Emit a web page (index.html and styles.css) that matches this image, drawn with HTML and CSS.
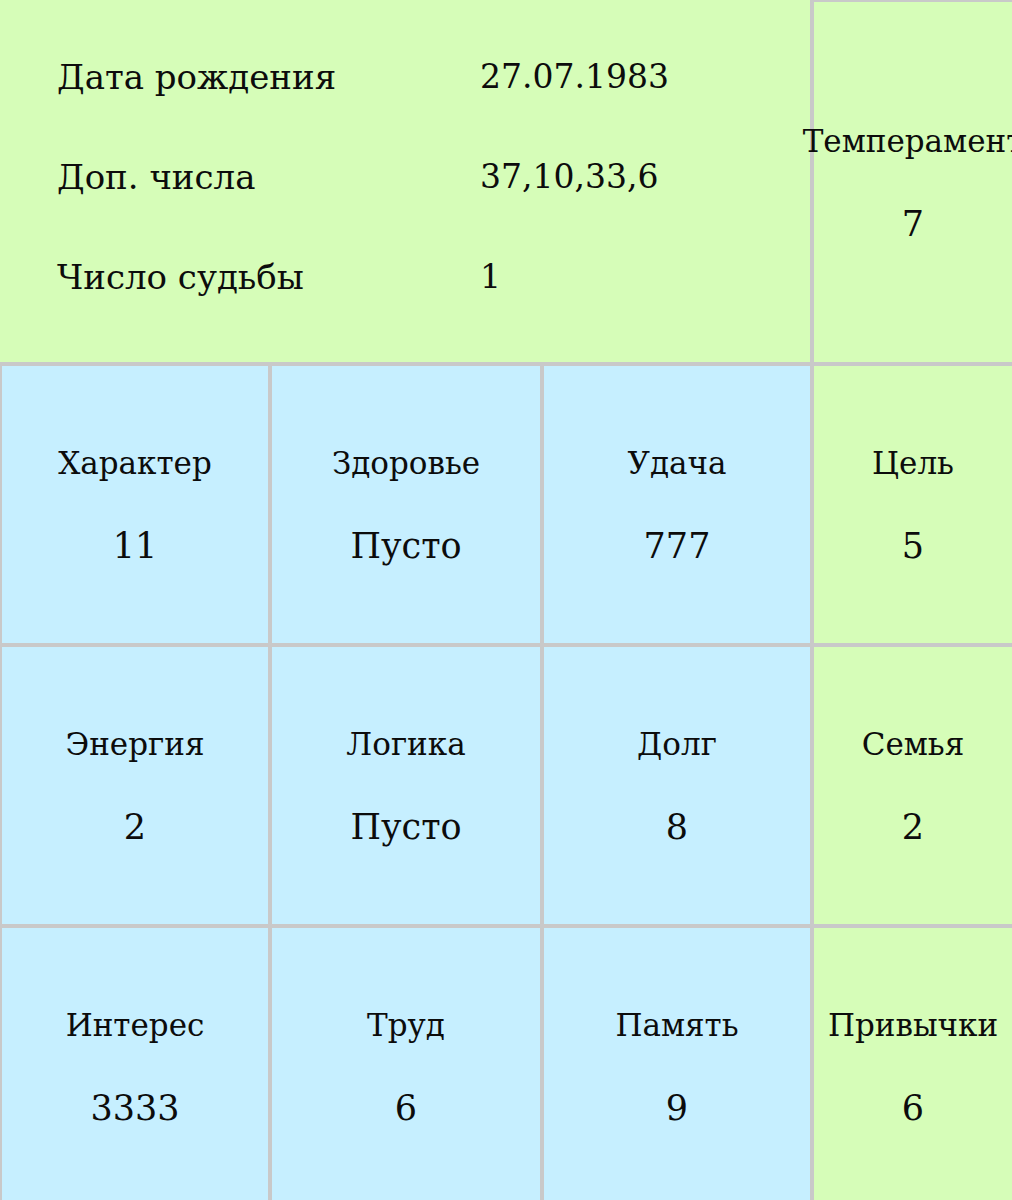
FILE: index.html
```html
<!DOCTYPE html>
<html lang="ru">
<head>
<meta charset="utf-8">
<title>Матрица</title>
<link rel="stylesheet" href="styles.css">
</head>
<body>
<div class="board">
  <div class="info">
    <div class="info-grid">
      <div class="info-label">Дата рождения</div><div class="info-value">27.07.1983</div>
      <div class="info-label">Доп. числа</div><div class="info-value">37,10,33,6</div>
      <div class="info-label">Число судьбы</div><div class="info-value">1</div>
    </div>
  </div>
  <div class="cell green temper"><div class="label">Темперамент</div><div class="value">7</div></div>

  <div class="cell blue"><div class="label">Характер</div><div class="value">11</div></div>
  <div class="cell blue"><div class="label">Здоровье</div><div class="value">Пусто</div></div>
  <div class="cell blue"><div class="label">Удача</div><div class="value">777</div></div>
  <div class="cell green"><div class="label">Цель</div><div class="value">5</div></div>

  <div class="cell blue"><div class="label">Энергия</div><div class="value">2</div></div>
  <div class="cell blue"><div class="label">Логика</div><div class="value">Пусто</div></div>
  <div class="cell blue"><div class="label">Долг</div><div class="value">8</div></div>
  <div class="cell green"><div class="label">Семья</div><div class="value">2</div></div>

  <div class="cell blue"><div class="label">Интерес</div><div class="value">3333</div></div>
  <div class="cell blue"><div class="label">Труд</div><div class="value">6</div></div>
  <div class="cell blue"><div class="label">Память</div><div class="value">9</div></div>
  <div class="cell green"><div class="label">Привычки</div><div class="value">6</div></div>
</div>
</body>
</html>
```

FILE: styles.css
```css
html, body {
  margin: 0;
  padding: 0;
  overflow: hidden;
  background: #ffffff;
}

body {
  font-family: "DejaVu Serif", "Liberation Serif", serif;
  color: #0c0c0c;
}

.board {
  display: grid;
  grid-template-columns: 266px 268px 266px 198px;
  grid-template-rows: 362px 277px 277px 277px;
  column-gap: 4px;
  row-gap: 4px;
  padding: 0 0 0 2px;
  background: #c9c9c9;
  width: 1010px;
}

.info {
  grid-column: 1 / 4;
  background: #d6fdb8;
  margin-left: -2px;
  padding: 27px 0 0 57px;
}

.info-grid {
  display: grid;
  grid-template-columns: 423px auto;
  grid-auto-rows: 100px;
  font-size: 34px;
  line-height: 100px;
}

.info-value {
  font-size: 33px;
}

.info-label,
.info-value {
  white-space: nowrap;
}

.cell {
  display: flex;
  flex-direction: column;
  align-items: center;
  justify-content: center;
  gap: 43px;
  white-space: nowrap;
}

.green {
  background: #d6fdb8;
}

.blue {
  background: #c6efff;
}

.temper {
  margin-top: 2px;
}

.label {
  font-size: 31px;
  line-height: 40px;
}

.value {
  font-size: 35px;
  line-height: 40px;
}
```
